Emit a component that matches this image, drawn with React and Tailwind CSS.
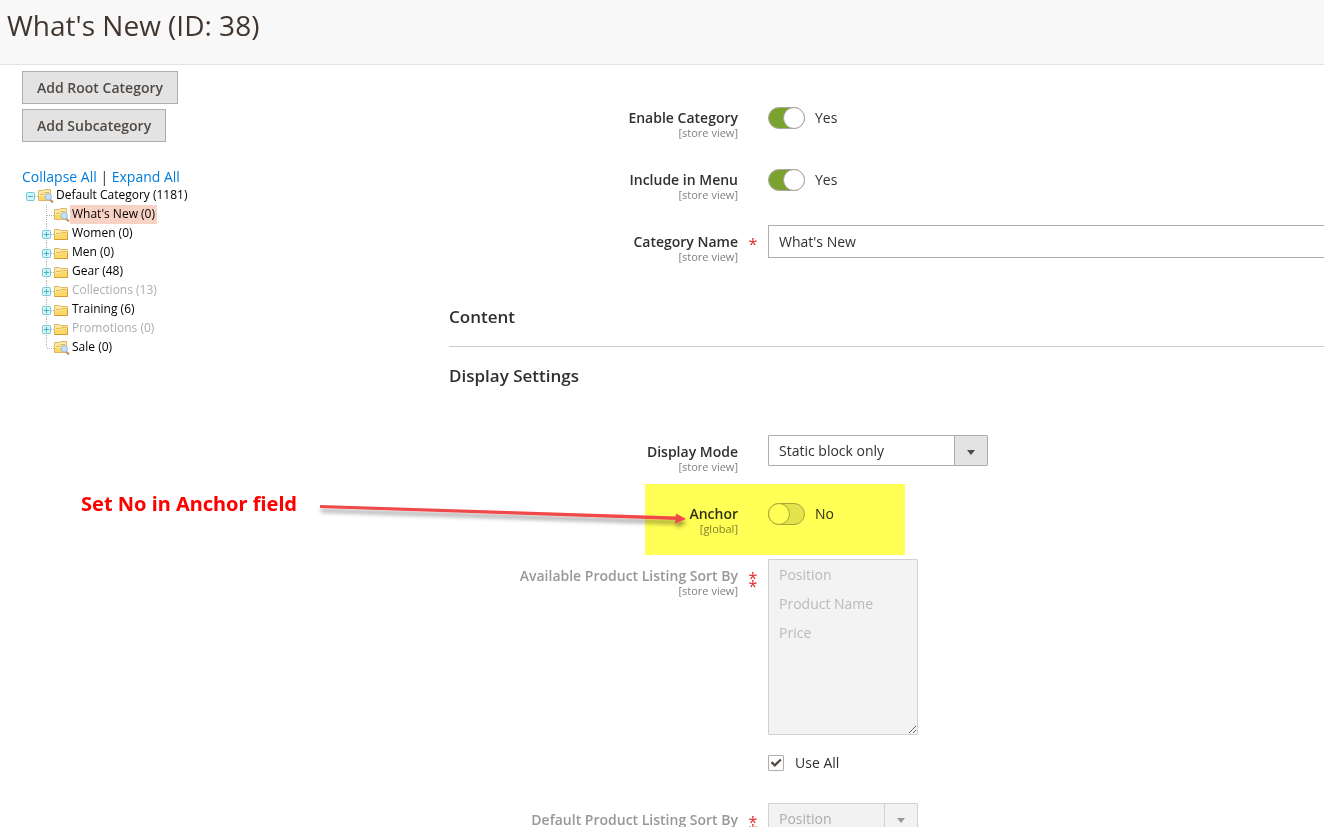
import React from 'react';

const rootCategory = { name: 'Default Category (1181)', leaf: true };

const categories = [
  { name: "What's New (0)", leaf: true, selected: true },
  { name: 'Women (0)' },
  { name: 'Men (0)' },
  { name: 'Gear (48)' },
  { name: 'Collections (13)', inactive: true },
  { name: 'Training (6)' },
  { name: 'Promotions (0)', inactive: true },
  { name: 'Sale (0)', leaf: true },
];

const FolderIcon = ({ search }) => (
  <svg className="w-4 h-[19px] shrink-0" viewBox="0 0 16 19" aria-hidden="true">
    <path d={search ? 'M.5 14.5V4.5H5.5L6.5 3.5H12.5V14.5Z' : 'M.5 15.5V5.5H5.5L6.5 6.5H13.5V15.5Z'} fill="#fbe9a6" stroke="#e3b566" />
    {search ? (
      <>
        <path d="M2 8.5H5.5L7 6.5H11" fill="none" stroke="#e9b84c" />
        <path d="M1 14V10H6L7.5 8.5H12V14Z" fill="#fbd968" />
        <path d="M12 13.5L15 16.5" stroke="#c98a55" strokeWidth="2" />
        <circle cx="10.3" cy="10.8" r="3.2" fill="#c5e2fa" stroke="#9dbde3" />
      </>
    ) : (
      <>
        <path d="M2 9.5H6.5L8 8.5H12.5" fill="none" stroke="#e9b84c" />
        <path d="M1 15V11H6.5L8 9.5H13V15Z" fill="#fbd968" />
        <path d="M.5 15.5H13.5V9" fill="none" stroke="#d99a35" />
      </>
    )}
  </svg>
);

const Elbow = ({ leaf, last, minus }) => (
  <svg className="w-4 h-[19px] shrink-0" viewBox="0 0 16 19" aria-hidden="true">
    {!minus && <path d={last ? 'M8.5 0V10' : 'M8.5 0V19'} stroke="#b8b8b8" strokeDasharray="1 1" />}
    <path d="M9 10.5H16" stroke="#b8b8b8" strokeDasharray="1 1" />
    {!leaf && (
      <>
        <rect x="4.5" y="6.5" width="8" height="8" rx="1" fill="#d5f3f6" stroke="#6fcbd6" />
        <path d={minus ? 'M6 10.5H11' : 'M6 10.5H11M8.5 8V13'} stroke="#45b3c1" />
      </>
    )}
  </svg>
);

const TreeNode = ({ node, root, last }) => (
  <div className="flex h-[19px]">
    <Elbow leaf={!root && node.leaf} last={last} minus={root} />
    <FolderIcon search={node.leaf} />
    <a
      href="#"
      className={`px-[2px] text-[12px] leading-[18px] whitespace-nowrap ${node.selected ? 'bg-[#f8d2c4]' : ''} ${
        node.inactive ? 'text-[#adadad]' : 'text-black'
      }`}
    >
      {node.name}
    </a>
  </div>
);

const Field = ({ id, label, scope, required = 0, disabled, children, className = '' }) => (
  <div className={`relative flex items-start ${className}`}>
    <div className="w-[289px] shrink-0 pt-2 text-right">
      <label
        htmlFor={id}
        className={`block text-[14px] leading-[18px] font-semibold ${disabled ? 'text-[#989898]' : 'text-[#303030]'}`}
      >
        {label}
      </label>
      <span className="block text-[11px] leading-[12px] text-[#808080]">[{scope}]</span>
    </div>
    <div className="w-[30px] shrink-0 pt-[15px] text-center text-[16px] leading-[8px] text-[#e22626]">
      {required > 0 && <span className="block">*</span>}
      {required > 1 && <span className="block">*</span>}
    </div>
    <div className="min-w-0 flex-1">{children}</div>
  </div>
);

const Toggle = ({ id, checked }) => (
  <div className="flex items-center gap-[10px] pt-[6px]">
    <input
      id={id}
      type="checkbox"
      role="switch"
      defaultChecked={checked}
      className="peer h-[22px] w-[37px] appearance-none rounded-full border border-[#aaa6a0] bg-[#e3e3e3] before:-ml-px before:-mt-px before:block before:size-[22px] before:rounded-full before:border before:border-[#aaa6a0] before:bg-white checked:bg-[#79a22e] checked:before:ml-[14px]"
    />
    <span className="text-[14px] leading-[22px] text-[#303030]">{checked ? 'Yes' : 'No'}</span>
  </div>
);

const Select = ({ id, value, disabled, className }) => (
  <div className={`relative h-[31px] ${className}`}>
    <select
      id={id}
      disabled={disabled}
      className="size-full appearance-none rounded-[1px] border border-[#adadad] bg-white pl-[10px] text-[14px] text-[#303030] disabled:border-[#d1d1d1] disabled:bg-[#f2f2f2] disabled:text-[#adadad] disabled:opacity-100"
    >
      <option>{value}</option>
    </select>
    <span
      className={`pointer-events-none absolute inset-y-px right-px flex w-[33px] items-center justify-center border-l ${
        disabled ? 'border-[#d1d1d1] bg-[#f2f2f2] text-[#989898]' : 'border-[#adadad] bg-[#e3e3e3] text-[#514943]'
      }`}
    >
      <svg className="mt-[3px] h-[5px] w-[8px]" viewBox="0 0 8 5" fill="currentColor" aria-hidden="true">
        <path d="M0 0H8L4 5Z" />
      </svg>
    </span>
  </div>
);

const Annotation = () => (
  <>
    <div className="pointer-events-none absolute -top-[13px] left-[196px] h-[71px] w-[260px] bg-[#ffff55] mix-blend-multiply" />
    <div className="pointer-events-none absolute -top-[8px] right-full -mr-[240px] flex items-start gap-[18px]">
      <strong className="font-['Noto_Sans','Open_Sans',sans-serif] text-[20px] leading-[30px] font-bold whitespace-nowrap text-[#ff0000]">
        Set No in Anchor field
      </strong>
      <svg className="h-[44px] w-[374px] shrink-0" viewBox="0 0 374 44" aria-hidden="true">
        <defs>
          <filter id="arrowShadow" x="-5%" y="-50%" width="110%" height="250%">
            <feDropShadow dx="1" dy="4" stdDeviation="2" floodColor="#000" floodOpacity="0.4" />
          </filter>
        </defs>
        <g filter="url(#arrowShadow)">
          <path d="M5 16L362 27.5V31L5 19Z" fill="#f04a48" />
          <path d="M361 24.5L371 30L360 34.5Z" fill="#f04a48" />
        </g>
      </svg>
    </div>
  </>
);

const SectionTitle = ({ children, className = '' }) => (
  <h2 className={`text-[17px] font-semibold text-[#303030] ${className}`}>{children}</h2>
);

const App = () => {
  return (
    <div className="flex h-screen flex-col overflow-hidden bg-white font-['Open_Sans','Noto_Sans',sans-serif]">
      <header className="shrink-0 border-b border-[#e3e3e3] bg-[#f8f8f8] px-[7px] pt-[5px] pb-[19px]">
        <h1 className="text-[28px] leading-[40px] text-[#41362f]">What's New (ID: 38)</h1>
      </header>

      <main className="flex min-h-0 flex-1 items-start">
        <aside className="w-[449px] shrink-0 pt-[6px] pl-[22px]">
          <div className="flex flex-col items-start gap-[5px]">
            <button type="button" className="h-[33px] border border-[#adadad] bg-[#e3e3e3] px-[14px] text-[14px] font-semibold text-[#514943]">
              Add Root Category
            </button>
            <button type="button" className="h-[33px] border border-[#adadad] bg-[#e3e3e3] px-[14px] text-[14px] font-semibold text-[#514943]">
              Add Subcategory
            </button>
          </div>

          <div className="mt-[26px] text-[14px] leading-[18px] text-[#303030]">
            <a href="#" className="text-[#007bdb]">Collapse All</a>
            {' | '}
            <a href="#" className="text-[#007bdb]">Expand All</a>
          </div>

          <nav aria-label="Categories">
            <TreeNode node={rootCategory} root />
            <div className="pl-4">
              {categories.map((node, i) => (
                <TreeNode key={node.name} node={node} last={i === categories.length - 1} />
              ))}
            </div>
          </nav>
        </aside>

        <form className="min-w-0 flex-1 pt-9">
          <div className="flex flex-col gap-6">
            <Field id="enable" label="Enable Category" scope="store view">
              <Toggle id="enable" checked />
            </Field>
            <Field id="menu" label="Include in Menu" scope="store view">
              <Toggle id="menu" checked />
            </Field>
            <Field id="name" label="Category Name" scope="store view" required={1}>
              <input
                id="name"
                type="text"
                defaultValue="What's New"
                className="block h-[33px] w-full rounded-l-[1px] border border-r-0 border-[#adadad] px-[10px] text-[14px] text-[#303030]"
              />
            </Field>
          </div>

          <SectionTitle className="mt-6 border-b border-[#cccccc] leading-[59px]">Content</SectionTitle>
          <SectionTitle className="leading-[58px]">Display Settings</SectionTitle>

          <div className="mt-[30px] flex flex-col gap-6">
            <Field id="mode" label="Display Mode" scope="store view">
              <Select id="mode" value="Static block only" className="w-[220px]" />
            </Field>
            <Field id="anchor" label="Anchor" scope="global" className="h-[38px]">
              <Toggle id="anchor" />
              <Annotation />
            </Field>
            <Field id="available" label="Available Product Listing Sort By" scope="store view" required={2} disabled>
              <select
                id="available"
                multiple
                disabled
                className="block h-[176px] w-[150px] resize overflow-auto rounded-[1px] border border-[#d1d1d1] bg-[#f3f3f3] p-0 text-[14px] text-[#bbbbbb] opacity-100"
              >
                <option className="px-[10px] py-[5px] leading-[19px] text-[#bbbbbb]">Position</option>
                <option className="px-[10px] py-[5px] leading-[19px] text-[#bbbbbb]">Product Name</option>
                <option className="px-[10px] py-[5px] leading-[19px] text-[#bbbbbb]">Price</option>
              </select>
              <label className="mt-[18px] flex items-center gap-[11px] text-[14px] leading-[20px] text-[#303030]">
                <span className="relative flex">
                  <input type="checkbox" defaultChecked className="peer size-4 appearance-none rounded-[1px] border border-[#adadad] bg-white" />
                  <svg className="pointer-events-none absolute inset-0 size-4 opacity-0 peer-checked:opacity-100" viewBox="0 0 16 16" fill="none" aria-hidden="true">
                    <path d="M3.5 7.2L6.8 10.3L12.8 4.5" stroke="#514943" strokeWidth="2.3" />
                  </svg>
                </span>
                Use All
              </label>
            </Field>
            <Field id="default" label="Default Product Listing Sort By" scope="store view" required={2} disabled className="mt-[6px]">
              <Select id="default" value="Position" disabled className="w-[150px]" />
            </Field>
          </div>
        </form>
      </main>
    </div>
  );
};

export default App;
